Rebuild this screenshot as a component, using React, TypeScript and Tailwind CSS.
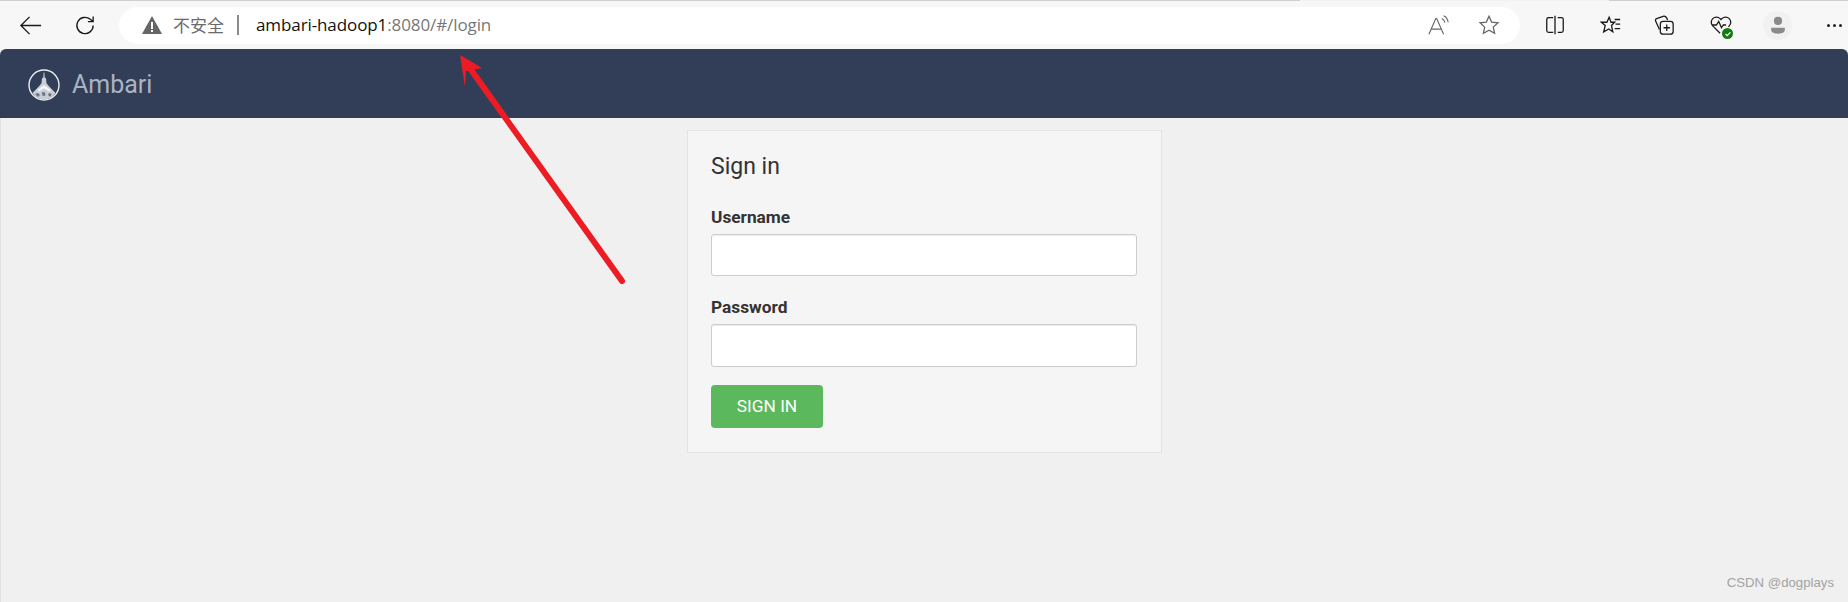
const Icon = ({ className, children }: { className?: string; children: React.ReactNode }) => (
  <svg viewBox="0 0 24 24" fill="none" stroke="currentColor" strokeWidth="1.4" className={className}>
    {children}
  </svg>
);

const Toolbar = () => (
  <div className="flex flex-col bg-[#f7f7f7]">
    {/* screenshot crop leaves a thin line of the window above */}
    <div className="flex h-[1px]">
      <div className="w-[1300px] bg-[#cfcfcf]" />
      <div className="w-[309px] bg-[#f2f2f2]" />
      <div className="flex-1 bg-[#cfcfcf]" />
    </div>
    <div className="flex h-[48px] items-center">
      <div className="flex w-[119px] shrink-0 items-center pl-[19px] gap-[32px] text-[#1a1a1a]">
        <Icon className="w-[23px] h-[23px]">
          <path d="M23 12H2M11 3l-9 9 9 9" />
        </Icon>
        <Icon className="w-[23px] h-[23px]">
          <path d="M20 12a8.500 8.500 0 1 1-3-6.500L20 8M20 2.500V8h-5.500" />
        </Icon>
      </div>
      <div className="flex h-[37px] w-[1401px] shrink-0 items-center rounded-full bg-white pl-[23px] pr-[20px]">
        <svg viewBox="0 0 20 18" className="w-[20px] h-[18px] text-[#666]">
          <path d="M10 0l10 18H0z" fill="currentColor" />
          <rect x="9" y="6" width="2" height="7" fill="#fff" />
          <rect x="9" y="14" width="2" height="2" fill="#fff" />
        </svg>
        <span className="ml-[11px] text-[17px] text-[#6a6a6a] font-['Noto_Sans_CJK_SC',sans-serif]">不安全</span>
        <span className="ml-[13px] h-[20px] w-[2px] bg-[#8a8a8a]" />
        <span className="ml-[17px] text-[17px] tracking-[-0.1px] text-[#111] font-['Open_Sans',sans-serif]">
          ambari-hadoop1<span className="text-[#777]">:8080/#/login</span>
        </span>
        <div className="ml-auto flex items-center gap-[28px] text-[#666]">
          <svg viewBox="0 0 24 24" fill="none" stroke="currentColor" strokeWidth="1.2" className="w-[22px] h-[22px]">
            <path d="M1 22L8.500 5h1L17 22M4 16.500h11M15 5c1.800.8 3 2.200 3.500 4.500M17 2c2.500 1 4.500 3.500 5 7" />
          </svg>
          <Icon className="w-[22px] h-[22px]">
            <path d="M12 2.500l2.900 6.300 6.900.8-5.100 4.700 1.400 6.800-6.100-3.400-6.100 3.400 1.400-6.800-5.100-4.700 6.900-.8z" />
          </Icon>
        </div>
      </div>
      <div className="flex flex-1 items-center pl-[24px] text-[#1a1a1a]">
        <Icon className="w-[22px] h-[22px]">
          <path d="M10 4H5a2 2 0 0 0-2 2v12a2 2 0 0 0 2 2h5M15 4h4a2 2 0 0 1 2 2v12a2 2 0 0 1-2 2h-4M12 2v20" />
        </Icon>
        <Icon className="ml-[34px] w-[22px] h-[22px]">
          <path d="M10 3.500l2 5.500h4l-3.500 3.500 1.500 7-4.500-3.200L4 19.500l1.700-7L1.500 9h6zM16 6h6M17 11h5M16 16h6" />
        </Icon>
        <Icon className="ml-[31px] w-[22px] h-[22px]">
          <path d="M7 17L3 8a2 2 0 0 1 1-3l7-2.500c2-.5 3 0 4 2l1 2" />
          <rect x="8" y="8" width="14" height="14" rx="3" />
          <path d="M15 11.500v7M11.500 15h7" />
        </Icon>
        <div className="relative ml-[35px] w-[22px] h-[22px]">
          <Icon className="w-[22px] h-[22px]">
            <path d="M11 21l-8-8a5.500 5.500 0 0 1 8-8l1 1 1-1a5.500 5.500 0 0 1 8 8l-1 1" />
            <path d="M2 12h5l2.500-4 3 7 2-3h3" />
          </Icon>
          <span className="absolute right-[-1px] bottom-[-3px] flex h-[11px] w-[11px] items-center justify-center rounded-full bg-[#107c10]">
            <svg viewBox="0 0 10 10" className="w-[8px] h-[8px]" fill="none" stroke="#fff" strokeWidth="1.600">
              <path d="M2 5l2 2 4-4" />
            </svg>
          </span>
        </div>
        <div className="ml-[31px] flex h-[29px] w-[29px] items-center justify-center rounded-full bg-[#f1f1f1]">
          <svg viewBox="0 0 22 22" className="w-[20px] h-[20px]" fill="#8a8a8a">
            <circle cx="11" cy="6.500" r="4.500" />
            <path d="M3.500 14h15v2.500c0 2.500-3.500 4-7.500 4s-7.500-1.500-7.500-4z" />
          </svg>
        </div>
        <div className="ml-[35px] flex gap-[3px]">
          <span className="h-[3px] w-[3px] rounded-full bg-[#222]" />
          <span className="h-[3px] w-[3px] rounded-full bg-[#222]" />
          <span className="h-[3px] w-[3px] rounded-full bg-[#222]" />
        </div>
      </div>
    </div>
  </div>
);

const AmbariLogo = () => (
  <svg viewBox="0 0 32 32" className="w-[32px] h-[32px]">
    <circle cx="16" cy="16" r="15" fill="none" stroke="#eceef1" strokeWidth="1.400" />
    {/* tower with spire and dotted base */}
    <path d="M15.600 3.500h.8l.3 5 1.300.8.500 5 2.500 3 6.500 6.700A14.400 14.400 0 0 1 16 30.500 14.400 14.400 0 0 1 4.500 24l6.500-6.700 2.500-3 .5-5 1.300-.8z" fill="#c9cdd5" />
    <path d="M9 21l7-5 7 5-2 1.500-5-3-5 3z" fill="#f2f3f5" />
    <path d="M7 25l3-1 2 2-2 2zM14 23l3 .5.500 3-3 .5zM21 24l3 1-2 3-2-2z" fill="#69748a" />
  </svg>
);

const Field = ({ label, inputHeight }: { label: string; inputHeight: string }) => (
  <div className="flex flex-col">
    <label className="h-[23px] text-[17.300px] leading-[23px] font-bold text-[#333]">{label}</label>
    <input
      className={`mt-[5px] w-full rounded-[3px] border border-[#ccc] bg-white shadow-[inset_0_1px_1px_rgba(0,0,0,0.075)] ${inputHeight}`}
    />
  </div>
);

export default function App() {
  return (
    <div className="relative flex h-[602px] w-[1848px] flex-col overflow-hidden bg-[#f0f0f0] font-['Roboto',sans-serif]">
      <Toolbar />
      <header className="flex h-[69px] items-center gap-[12px] rounded-t-[6px] bg-[#323e58] pl-[28px] pt-[2px]">
        <AmbariLogo />
        <span className="text-[25px] text-[#a9b3c2]">Ambari</span>
      </header>
      <main className="flex flex-1 justify-center pt-[12px] border-l border-[#e2e2e2]">
        <div className="flex h-[323px] w-[475px] flex-col border border-[#e3e3e3] bg-[#f5f5f5] pl-[23px] pr-[24px]">
          <h1 className="mt-[21px] h-[30px] text-[23px] leading-[30px] text-[#333]">Sign in</h1>
          <div className="mt-[24px] flex flex-col gap-[20px]">
            <Field label="Username" inputHeight="h-[42px]" />
            <Field label="Password" inputHeight="h-[43px]" />
          </div>
          <button className="mt-[18px] h-[43px] w-[112px] rounded-[4px] bg-[#5cb85c] text-[17.300px] text-white">
            SIGN IN
          </button>
        </div>
      </main>
      {/* red annotation arrow */}
      <svg className="absolute left-0 top-0 w-[1848px] h-[602px] pointer-events-none" viewBox="0 0 1848 602">
        <path d="M622 281L469 67" stroke="#ed1c24" strokeWidth="6" strokeLinecap="round" fill="none" />
        <path d="M460 55l22 13-16 3-1 16z" fill="#ed1c24" />
      </svg>
      <span className="absolute right-[14px] bottom-[9px] text-[13.200px] text-[#a3a3a3] font-['Liberation_Sans',sans-serif]">
        CSDN @dogplays
      </span>
    </div>
  );
}
